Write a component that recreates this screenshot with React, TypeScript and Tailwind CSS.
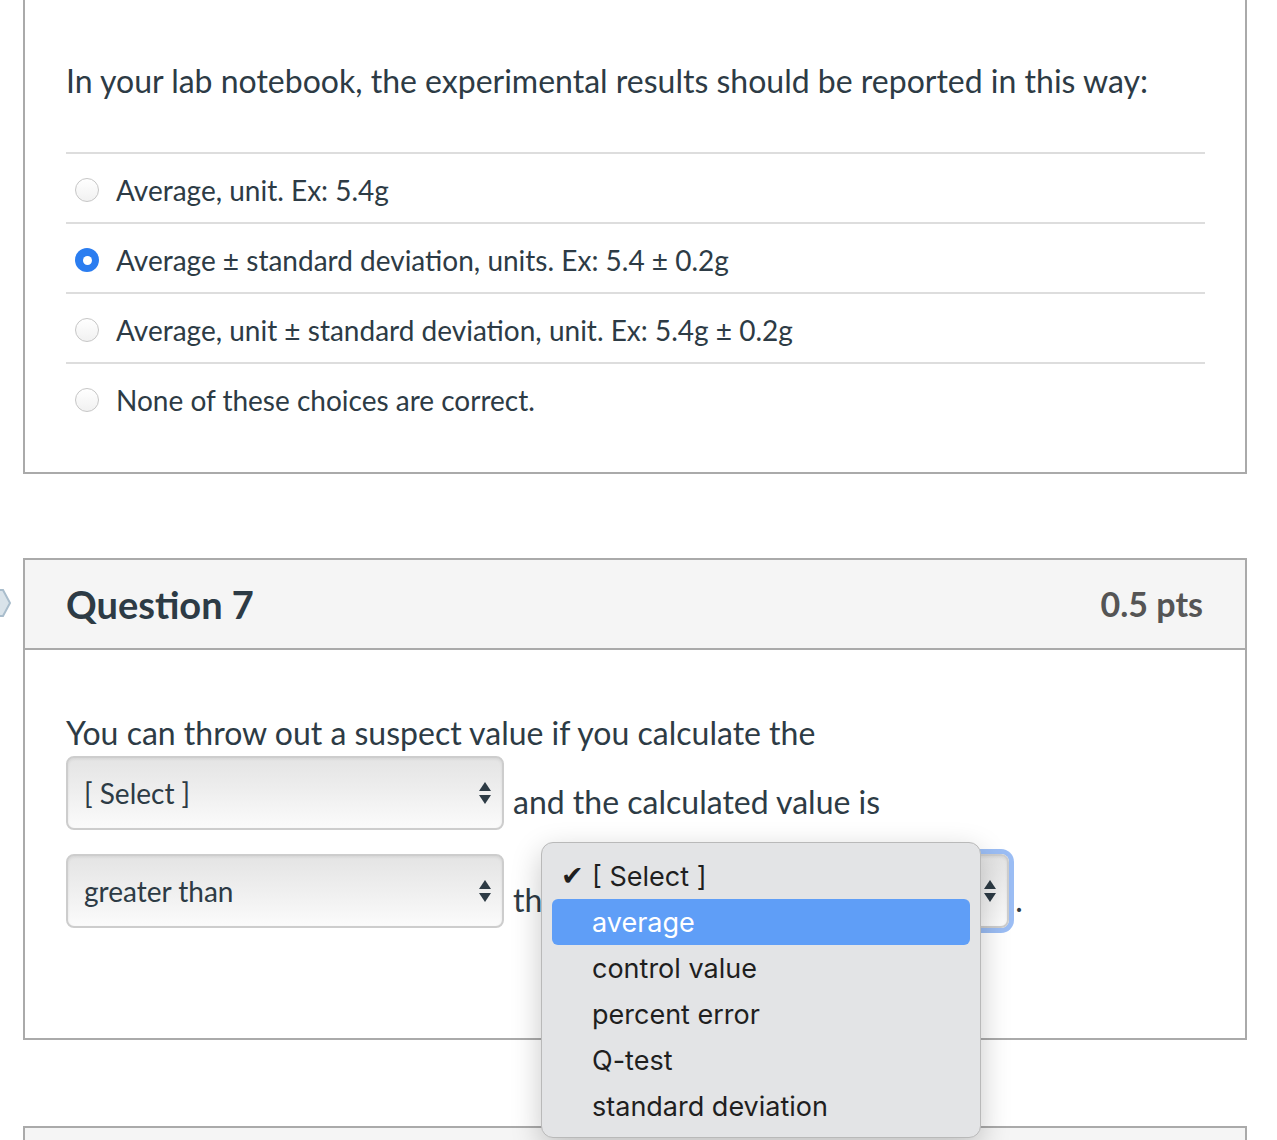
import React from 'react';

// 選択肢
const OPTIONS = [
  { label: 'Average, unit. Ex: 5.4g', checked: false },
  { label: 'Average ± standard deviation, units. Ex: 5.4 ± 0.2g', checked: true },
  { label: 'Average, unit ± standard deviation, unit. Ex: 5.4g ± 0.2g', checked: false },
  { label: 'None of these choices are correct.', checked: false },
];

const MENU_ITEMS = ['[ Select ]', 'average', 'control value', 'percent error', 'Q-test', 'standard deviation'];

function Arrows() {
  return (
    <svg width="14" height="26" viewBox="0 0 14 26" className="shrink-0">
      <path d="M7 2 L13 11 L1 11 Z" fill="#2d3b45" />
      <path d="M7 24 L13 15 L1 15 Z" fill="#2d3b45" />
    </svg>
  );
}

function Select({ value, focused }: { value?: string; focused?: boolean }) {
  return (
    <div
      className={`flex h-[74px] w-[438px] shrink-0 items-center justify-between rounded-[8px] border-2 border-[#cdcdcd] bg-gradient-to-b from-[#e4e4e4] via-[#efefef] to-[#fbfbfb] pl-[16px] pr-[10px] shadow-[inset_0_1px_3px_rgba(0,0,0,0.08)] ${
        focused ? 'ring-[5px] ring-[#9bbdf4]' : ''
      }`}
    >
      <span className="text-[28px] leading-none text-[#2d3b45]">{value}</span>
      <Arrows />
    </div>
  );
}

function Radio({ checked }: { checked: boolean }) {
  if (checked) {
    return (
      <span className="flex h-[24px] w-[24px] shrink-0 items-center justify-center rounded-full bg-[#2b7df0]">
        <span className="h-[9px] w-[9px] rounded-full bg-white" />
      </span>
    );
  }
  return (
    <span className="h-[24px] w-[24px] shrink-0 rounded-full border border-[#c6c6c6] bg-gradient-to-b from-white to-[#f1f1f1]" />
  );
}

export default function App() {
  return (
    <div className="relative h-[1140px] w-[1277px] overflow-hidden bg-white font-[Lato,sans-serif] text-[#2d3b45]">
      {/* 前の問題 */}
      <div className="ml-[23px] w-[1224px] border-x-2 border-b-2 border-[#aaaaaa] pl-[41px] pr-[40px] pt-[60px] pb-[40px]">
        <p className="text-[32px] leading-[42px]">
          In your lab notebook, the experimental results should be reported in this way:
        </p>
        <div className="mt-[50px]">
          {OPTIONS.map((opt, idx) => (
            <div key={idx} className="flex h-[70px] items-center border-t-2 border-[#dddddd] pl-[9px] pt-[4px]">
              <Radio checked={opt.checked} />
              <span className="ml-[17px] text-[28px] leading-none">{opt.label}</span>
            </div>
          ))}
        </div>
      </div>

      {/* Question 7 */}
      <div className="relative ml-[23px] mt-[84px] w-[1224px] border-2 border-[#aaaaaa]">
        <svg width="12" height="30" viewBox="0 0 12 30" className="absolute -left-[25px] top-[28px]">
          <path d="M-4 2 L3 2 L10 15 L3 28 L-4 28 Z" fill="#d9e3ea" stroke="#a9bdcc" strokeWidth="2" />
        </svg>
        <div className="flex h-[90px] items-center justify-between border-b-2 border-[#aaaaaa] bg-[#f5f5f5] pl-[41px] pr-[42px]">
          <h2 className="text-[38px] font-bold leading-none">Question 7</h2>
          <span className="text-[34px] font-bold leading-none text-[#555555]">0.5 pts</span>
        </div>
        <div className="pl-[41px] pt-[62px] pb-[110px]">
          <p className="text-[32px] leading-[42px]">You can throw out a suspect value if you calculate the</p>
          <div className="mt-[2px] flex items-start">
            <Select value="[ Select ]" />
            <span className="ml-[9px] mt-[25px] text-[32px] leading-[42px]">and the calculated value is</span>
          </div>
          <div className="mt-[24px] flex items-start">
            <Select value="greater than" />
            <span className="ml-[9px] mt-[25px] text-[32px] leading-[42px]">the</span>
            <div className="ml-[12px]">
              <Select value="" focused />
            </div>
            <span className="ml-[6px] mt-[25px] text-[32px] leading-[42px]">.</span>
          </div>
        </div>
      </div>

      {/* 次の問題 */}
      <div className="ml-[23px] mt-[86px] h-[100px] w-[1224px] border-x-2 border-t-2 border-[#aaaaaa] bg-[#f5f5f5]" />

      {/* ドロップダウンメニュー */}
      <div className="absolute left-[541px] top-[842px] w-[440px] rounded-[12px] border border-[#b9b9b9] bg-[#e3e4e6] px-[10px] pt-[10px] pb-[8px] font-[Inter,'Liberation_Sans',sans-serif] shadow-[0_10px_30px_rgba(0,0,0,0.22)]">
        {MENU_ITEMS.map((item, idx) => (
          <div
            key={item}
            className={`relative flex h-[46px] items-center rounded-[6px] pl-[40px] text-[27px] leading-none ${
              idx === 1 ? 'bg-[#5f9ef7] text-white' : 'text-[#1f1f1f]'
            }`}
          >
            {idx === 0 && (
              <span className="absolute left-[9px] top-[9px] font-['DejaVu_Sans',sans-serif] text-[27px] leading-none">✔</span>
            )}
            {item}
          </div>
        ))}
      </div>
    </div>
  );
}
